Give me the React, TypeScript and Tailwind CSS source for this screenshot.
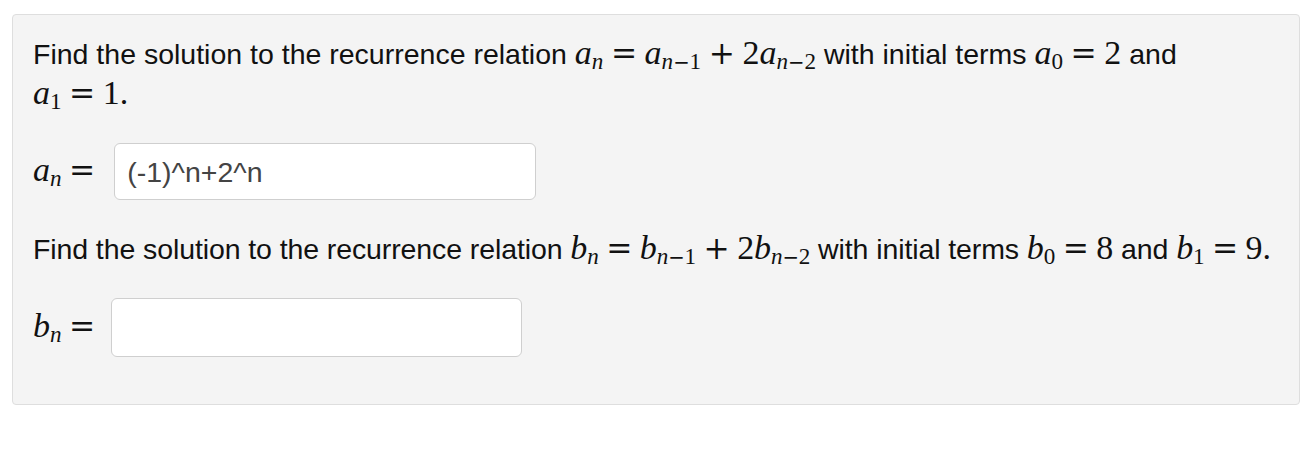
import React from "react";

const sans = "font-['Helvetica_Neue','Liberation_Sans',Arial,sans-serif]";

function V({ c }: { c: string }) {
  return <span className="italic">{c}</span>;
}

function Sub({ children }: { children: React.ReactNode }) {
  return <span className="text-[0.68em] align-[-0.2em] not-italic">{children}</span>;
}

function Var({ c, sub }: { c: string; sub: React.ReactNode }) {
  return (
    <span className="whitespace-nowrap">
      <V c={c} />
      <Sub>{sub}</Sub>
    </span>
  );
}

function SubN({ k }: { k?: string }) {
  return (
    <>
      <span className="italic">n</span>
      {k && (
        <>
          <span className="font-['DejaVu_Sans',sans-serif] text-[0.85em]">−</span>
          {k}
        </>
      )}
    </>
  );
}

function Op({ o }: { o: string }) {
  return (
    <span className="font-['DejaVu_Serif',serif] text-[0.92em] mx-[0.24em]">
      {o}
    </span>
  );
}

function M({ children }: { children: React.ReactNode }) {
  return (
    <span className="font-['Liberation_Serif','Times_New_Roman',serif] text-[34px] leading-none whitespace-nowrap">
      {children}
    </span>
  );
}

export default function App() {
  return (
    <div className="bg-white w-[1313px] h-[449px] pl-[12px] pr-[13px] pt-[14px]">
      <div
        className={`${sans} bg-[#f4f4f4] border border-[#dedede] rounded-[4px] h-[391px] px-[20px] pt-[19px] text-[28.5px] leading-[40px] text-[#111]`}
      >
        {/* first question */}
        <p>
          Find the solution to the recurrence relation{" "}
          <M>
            <Var c="a" sub={<SubN />} />
            <Op o="=" />
            <Var c="a" sub={<SubN k="1" />} />
            <Op o="+" />
            2<Var c="a" sub={<SubN k="2" />} />
          </M>{" "}
          with initial terms{" "}
          <M>
            <Var c="a" sub="0" />
            <Op o="=" />2
          </M>{" "}
          and
          <br />
          <M>
            <Var c="a" sub="1" />
            <Op o="=" />
            1.
          </M>
        </p>

        <div className="flex items-center gap-[19px] mt-[29px]">
          <M>
            <Var c="a" sub={<SubN />} />
            <span className="font-['DejaVu_Serif',serif] text-[0.92em] ml-[0.24em]">=</span>
          </M>
          <div className="w-[422px] h-[57px] bg-white border border-[#cfcfcf] rounded-[6px] flex items-center px-[12px] text-[#444]">
            (-1)^n+2^n
          </div>
        </div>

        {/* second question */}
        <p className="mt-[29px] whitespace-nowrap tracking-[-0.1px]">
          Find the solution to the recurrence relation{" "}
          <M>
            <Var c="b" sub={<SubN />} />
            <Op o="=" />
            <Var c="b" sub={<SubN k="1" />} />
            <Op o="+" />
            2<Var c="b" sub={<SubN k="2" />} />
          </M>{" "}
          with initial terms{" "}
          <M>
            <Var c="b" sub="0" />
            <Op o="=" />8
          </M>{" "}
          and{" "}
          <M>
            <Var c="b" sub="1" />
            <Op o="=" />
            9.
          </M>
        </p>

        <div className="flex items-center gap-[16px] mt-[29px]">
          <M>
            <Var c="b" sub={<SubN />} />
            <span className="font-['DejaVu_Serif',serif] text-[0.92em] ml-[0.24em]">=</span>
          </M>
          <div className="w-[411px] h-[59px] bg-white border border-[#cfcfcf] rounded-[6px]" />
        </div>
      </div>
    </div>
  );
}
